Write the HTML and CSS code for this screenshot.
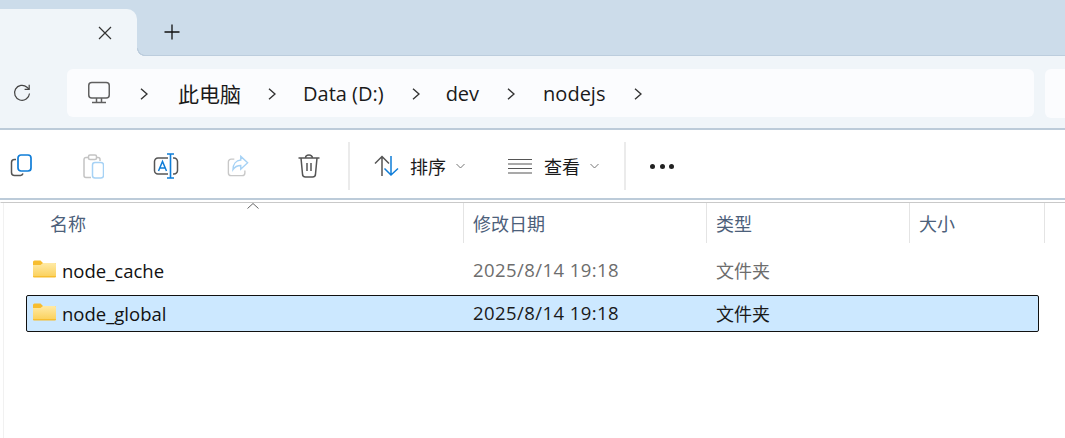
FILE: index.html
```html
<!DOCTYPE html>
<html lang="zh">
<head>
<meta charset="utf-8">
<title>nodejs</title>
<link rel="stylesheet" href="styles.css">
</head>
<body>
<div class="tabbar">
  <div class="tab">
    <svg class="tab-close" width="16" height="16" viewBox="0 0 16 16"><path d="M2 2 14 14M14 2 2 14" stroke="#333" stroke-width="1.2" fill="none"/></svg>
  </div>
  <svg class="tab-new" width="16" height="16" viewBox="0 0 16 16"><path d="M8 .5V15.500M.5 8H15.500" stroke="#111" stroke-width="1.300" fill="none"/></svg>
</div>
<div class="addressrow">
  <svg class="refresh" width="20" height="20" viewBox="0 0 20 20"><path d="M17.500 10.500A7.500 7.500 0 1 1 15 4.200L17 6" stroke="#444" stroke-width="1.2" fill="none"/><path d="M17.200 1.800V6.400H12.600" stroke="#444" stroke-width="1.2" fill="none"/></svg>
  <div class="address">
    <svg class="pc" width="24" height="24" viewBox="0 0 24 24"><rect x="1.750" y="1.500" width="20.500" height="15.500" rx="3" stroke="#606060" stroke-width="1.500" fill="none"/><path d="M9.500 17V21.500M14.500 17V21.500M5 21.500H19" stroke="#606060" stroke-width="1.500" fill="none"/></svg>
    <span class="chev"><svg width="8" height="12" viewBox="0 0 8 12"><path d="M1 .8l6 5.200L1 11.200" stroke="#333" stroke-width="1.400" fill="none"/></svg></span>
    <span class="crumb c1">此电脑</span>
    <span class="chev"><svg width="8" height="12" viewBox="0 0 8 12"><path d="M1 .8l6 5.200L1 11.200" stroke="#333" stroke-width="1.400" fill="none"/></svg></span>
    <span class="crumb c2">Data (D:)</span>
    <span class="chev"><svg width="8" height="12" viewBox="0 0 8 12"><path d="M1 .8l6 5.200L1 11.200" stroke="#333" stroke-width="1.400" fill="none"/></svg></span>
    <span class="crumb c3">dev</span>
    <span class="chev"><svg width="8" height="12" viewBox="0 0 8 12"><path d="M1 .8l6 5.200L1 11.200" stroke="#333" stroke-width="1.400" fill="none"/></svg></span>
    <span class="crumb c4">nodejs</span>
    <span class="chev"><svg width="8" height="12" viewBox="0 0 8 12"><path d="M1 .8l6 5.200L1 11.200" stroke="#333" stroke-width="1.400" fill="none"/></svg></span>
  </div>
  <div class="search"></div>
</div>
<div class="toolbar">
  <div class="tool t-copy"><svg width="24" height="24" viewBox="0 0 24 24"><path d="M6 5.500H4.500A3 3 0 0 0 1.500 8.500V18.500A3 3 0 0 0 4.500 21.500H10.500A3 3 0 0 0 13 19.500" stroke="#555" stroke-width="1.500" fill="none"/><rect x="8" y="1" width="13" height="16" rx="3" stroke="#0f7dd8" stroke-width="1.700" fill="none"/></svg></div>
  <div class="tool t-paste"><svg width="21" height="25" viewBox="0 0 21 25"><path d="M6 3.500H3A2 2 0 0 0 1 5.500V21.500A2 2 0 0 0 3 23.500H8M13 3.500H15A2 2 0 0 1 17 5.500V7" stroke="#c4c4c4" stroke-width="1.500" fill="none"/><rect x="5.500" y="1" width="8" height="4.500" rx="1.500" stroke="#c4c4c4" stroke-width="1.500" fill="none"/><rect x="9.500" y="8.500" width="11" height="15.500" rx="2.500" stroke="#a6d2f5" stroke-width="1.500" fill="#fff"/></svg></div>
  <div class="tool t-rename"><svg width="26" height="26" viewBox="0 0 26 26"><path d="M15 5H5A3.500 3.500 0 0 0 1.500 8.500V17.500A3.500 3.500 0 0 0 5 21H15M20 5H21A3.500 3.500 0 0 1 24.500 8.500V17.500A3.500 3.500 0 0 1 21 21H20" stroke="#555" stroke-width="1.500" fill="none"/><path d="M5.500 18 9.500 8.500 13.500 18M7 15H12" stroke="#0f7dd8" stroke-width="1.500" fill="none"/><path d="M14 1H21M14 25H21M17.500 1V25" stroke="#0f7dd8" stroke-width="1.600" fill="none"/></svg></div>
  <div class="tool t-share"><svg width="22" height="22" viewBox="0 0 24 24"><path d="M8 4.500H4.500A3 3 0 0 0 1.500 7.500V19.500A3 3 0 0 0 4.500 22.500H16.500A3 3 0 0 0 19.500 19.500V17" stroke="#c8c8c8" stroke-width="1.500" fill="none"/><path d="M15 1.500 22.500 8.500 15 15.500V11.500C11 11.500 8.500 13 6.500 16 6.500 10 10 6 15 5.500Z" stroke="#a6d2f5" stroke-width="1.500" fill="none"/></svg></div>
  <div class="tool t-trash"><svg width="22" height="24" viewBox="0 0 22 24"><path d="M.5 4H21.500M3 4 4.500 20A3 3 0 0 0 7.500 23H14.500A3 3 0 0 0 17.500 20L19 4M7.500 4A3.500 3 0 0 1 14.500 4M9 9V17M13 9V17" stroke="#555" stroke-width="1.500" fill="none"/></svg></div>
  <div class="tsep s1"></div>
  <div class="tool-text sort">
    <svg width="26" height="22" viewBox="0 0 26 22"><path d="M8 21V2M1 8.500 8 1.500 15 8.500" stroke="#555" stroke-width="1.500" fill="none"/><path d="M17 1V20M10.500 13.500 17 20 24 13.500" stroke="#0f7dd8" stroke-width="1.500" fill="none"/></svg>
    <span class="tlabel">排序</span>
    <svg class="caret" width="9" height="6" viewBox="0 0 9 6"><path d="M.5 1 4.500 5 8.500 1" stroke="#777" stroke-width="1" fill="none"/></svg>
  </div>
  <div class="tool-text view">
    <svg width="24" height="16" viewBox="0 0 24 16"><path d="M0 1.500H24M0 6H24M0 10.500H24M0 15H24" stroke="#555" stroke-width="1.200" fill="none"/></svg>
    <span class="tlabel">查看</span>
    <svg class="caret" width="9" height="6" viewBox="0 0 9 6"><path d="M.5 1 4.500 5 8.500 1" stroke="#777" stroke-width="1" fill="none"/></svg>
  </div>
  <div class="tsep s2"></div>
  <div class="more"><i></i><i></i><i></i></div>
</div>
<div class="content">
  <div class="sortarrow"><svg width="12" height="6" viewBox="0 0 12 6"><path d="M.5 5.500 6 .5 11.500 5.500" stroke="#666" stroke-width="1" fill="none"/></svg></div>
  <div class="head">
    <div class="hcell name">名称</div>
    <div class="hcell date">修改日期</div>
    <div class="hcell type">类型</div>
    <div class="hcell size">大小</div>
  </div>
  <div class="row">
    <div class="cell name"><svg class="folder" width="23" height="18" viewBox="0 0 23 18"><use href="#folder"/></svg>node_cache</div>
    <div class="cell date">2025/8/14 19:18</div>
    <div class="cell type">文件夹</div>
  </div>
  <div class="row selected">
    <div class="cell name"><svg class="folder" width="23" height="18" viewBox="0 0 23 18"><use href="#folder"/></svg>node_global</div>
    <div class="cell date">2025/8/14 19:18</div>
    <div class="cell type">文件夹</div>
  </div>
</div>
<svg class="defs" width="0" height="0">
  <defs>
    <linearGradient id="fg" x1="0" y1="0" x2="0" y2="1"><stop offset="0" stop-color="#ffeaa6"/><stop offset="1" stop-color="#fbd25f"/></linearGradient>
    <symbol id="folder" viewBox="0 0 23 18">
      <path d="M0 2A1.500 1.500 0 0 1 1.500 .5H7.500L10 3H22A1 1 0 0 1 23 4V16.500A1 1 0 0 1 22 17.500H1A1 1 0 0 1 0 16.500Z" fill="#f7bd2f"/>
      <path d="M0 5H7.500L10 3H22A1 1 0 0 1 23 4V16H0Z" fill="url(#fg)"/>
    </symbol>
  </defs>
</svg>
</body>
</html>
```
FILE: styles.css
```css
* { box-sizing: border-box; }
html, body { margin: 0; padding: 0; }
body {
  width: 1065px;
  height: 438px;
  overflow: hidden;
  background: #fff;
  font-family: "Open Sans", "Noto Sans CJK SC", sans-serif;
  color: #1a1a1a;
}
.defs { position: absolute; }

.tabbar {
  height: 56px;
  background: #ccdcea;
  border-bottom: 1px solid #bccddd;
  display: flex;
  align-items: flex-end;
}
.tab {
  position: relative;
  width: 137px;
  height: 47px;
  margin-bottom: -1px;
  background: #f0f5f9;
  border-radius: 0 10px 0 0;
  display: flex;
  align-items: center;
  justify-content: flex-end;
  padding: 0 24px 0 0;
}
.tab::after {
  content: "";
  position: absolute;
  left: 100%;
  bottom: 0;
  width: 8px;
  height: 8px;
  background: radial-gradient(circle at 100% 0, transparent 6.500px, #bccddd 7px, #bccddd 7.800px, #f0f5f9 8.300px);
}
.tab-new { margin: 0 0 15px 27px; }

.addressrow {
  height: 74px;
  background: #f0f5f9;
  border-bottom: 2px solid #bccbd9;
  display: flex;
  align-items: center;
  padding-top: 2px;
}
.refresh { margin-left: 12px; }
.address {
  margin-left: 35px;
  width: 967px;
  height: 48px;
  background: #fbfcfe;
  border-radius: 6px;
  display: flex;
  align-items: center;
  padding-left: 20px;
  font-size: 20px;
}
.pc { margin-top: -1px; }
.chev { display: flex; margin-top: 1px; }
.pc + .chev { margin-left: 29px; }
.crumb { white-space: nowrap; }
.c1 { margin-left: 30px; font-size: 21px; }
.c1 + .chev { margin-left: 27px; }
.c2 { margin-left: 27px; }
.c2 + .chev { margin-left: 28px; }
.c3 { margin-left: 26px; }
.c3 + .chev { margin-left: 28px; }
.c4 { margin-left: 28px; }
.c4 + .chev { margin-left: 29px; }
.search {
  margin-left: 11px;
  flex: 1;
  height: 49px;
  background: #fbfcfe;
  border-radius: 6px 0 0 6px;
}

.toolbar {
  height: 70px;
  background: #fff;
  border-bottom: 2px solid #bccbd9;
  display: flex;
  align-items: center;
  padding-top: 4px;
}
.tool { display: flex; }
.t-copy { margin-left: 10px; }
.t-paste { margin-left: 49px; }
.t-rename { margin-left: 49px; }
.t-share { margin-left: 48px; }
.t-trash { margin-left: 49px; }
.tsep { width: 2px; height: 48px; background: #ebebeb; }
.s1 { margin-left: 28px; }
.s2 { margin-left: 25px; }
.tool-text { display: flex; align-items: center; }
.sort { margin-left: 24px; }
.view { margin-left: 43px; }
.tlabel { font-size: 18px; }
.sort .tlabel { margin-left: 10px; }
.view .tlabel { margin-left: 12px; }
.caret { margin-left: 10px; }
.more { display: flex; gap: 4.500px; margin-left: 24px; }
.more i { display: block; width: 5px; height: 5px; border-radius: 50%; background: #222; }

.content {
  position: relative;
  height: 236px;
  margin-top: 2px;
  border-top: 1px solid #c9c9c9;
  border-left: 1px solid transparent;
  box-shadow: inset 2px 0 0 #fff, inset 3px 0 0 #f1f1f1;
}
.sortarrow { position: absolute; left: 246px; top: 0; display: flex; }
.head { display: flex; height: 40px; }
.hcell {
  font-size: 18px;
  color: #4c607a;
  padding: 0 0 0 9px;
  display: flex;
  align-items: center;
  border-right: 1px solid #e4e4e4;
}
.head .name { width: 463px; padding-left: 49px; }
.head .date { width: 243px; }
.head .type { width: 203px; }
.head .size { width: 135px; }
.row {
  display: flex;
  align-items: center;
  height: 37px;
  margin: 9px 0 0 25px;
  width: 1013px;
  font-size: 18px;
  border: 1px solid transparent;
  color: #6d6d6d;
}
.row + .row { margin-top: 6px; }
.row.selected { background: #cce8ff; border-color: #111; border-radius: 2px; color: #1a1a1a; }
.cell { white-space: nowrap; }
.row .name { width: 446px; padding-left: 6px; display: flex; align-items: center; color: #111; font-size: 18.500px; }
.folder { margin-right: 6px; margin-top: -3px; }
.row .date { width: 243px; font-size: 18.500px; letter-spacing: .43px; margin-top: -2px; }
.row .type { margin-top: -2px; }
```
